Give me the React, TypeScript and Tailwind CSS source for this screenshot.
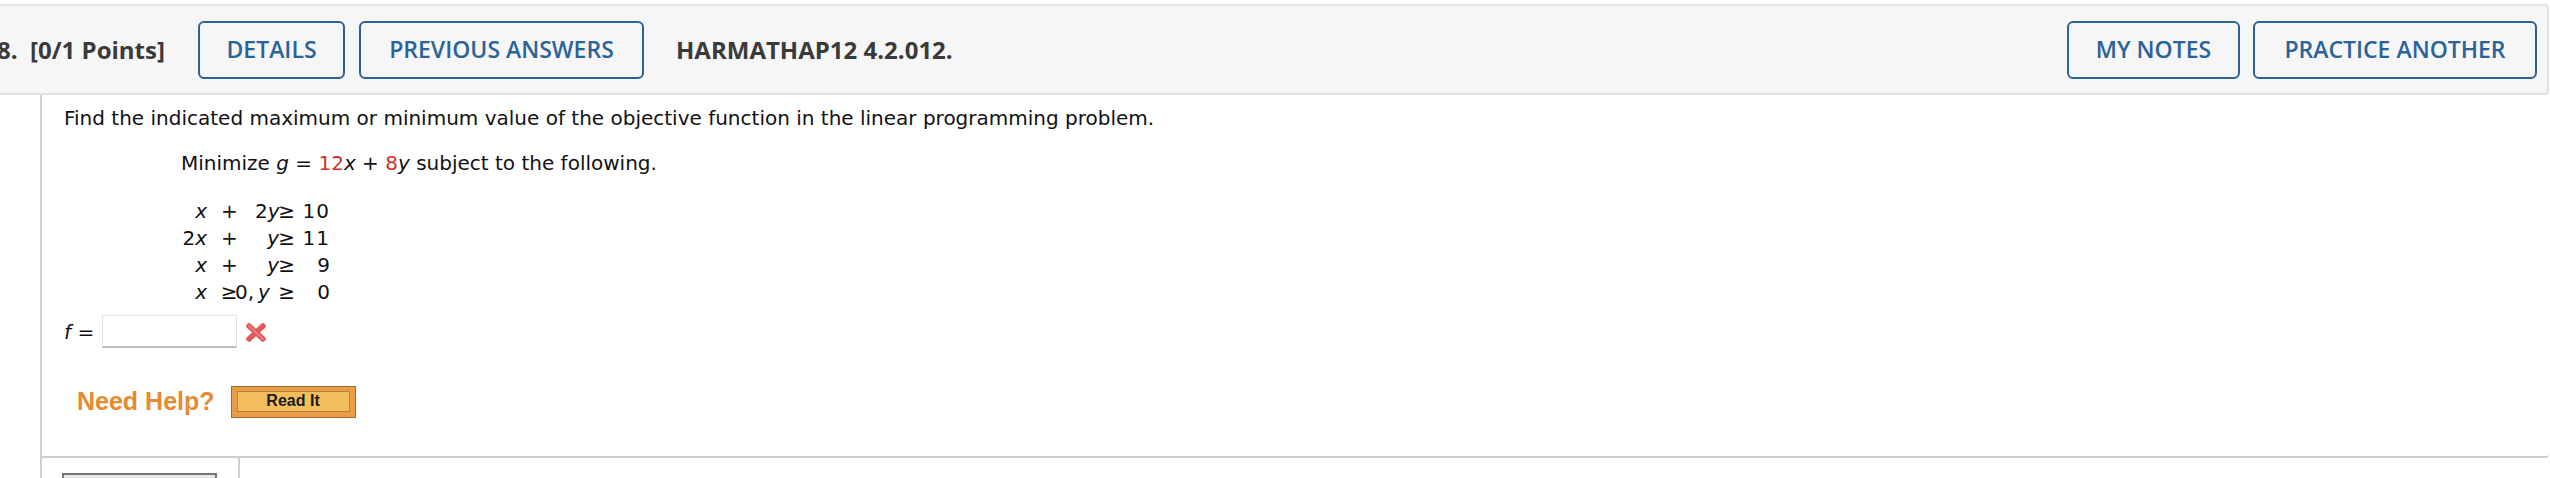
export default function App() {
  const blueBtn =
    "h-[58px] flex items-center justify-center border-2 border-[#2c6394] rounded-[6px] text-[#2b6398] text-[23px] font-semibold uppercase"

  return (
    <div className="w-[2550px] h-[478px] bg-white overflow-hidden" style={{ fontFamily: '"DejaVu Sans", Verdana, sans-serif' }}>
      {/* Question header */}
      <div
        className="mt-[4px] -ml-[8px] mr-[1px] h-[91px] flex items-center border-2 border-l-0 border-[#e2e2e2] rounded-r-[4px] bg-[#f6f6f6] pl-[5px] pr-[10px]"
        style={{ fontFamily: '"Open Sans", sans-serif' }}
      >
        <span className="w-[201px] text-[24px] font-bold text-[#3a3a3a] whitespace-pre">8.  [0/1 Points]</span>
        <div className="flex gap-[14px]">
          <button className={`${blueBtn} w-[147px]`}>Details</button>
          <button className={`${blueBtn} w-[285px]`}>Previous Answers</button>
        </div>
        <span className="ml-[32px] text-[24px] font-bold text-[#3a3a3a]">HARMATHAP12 4.2.012.</span>
        <div className="ml-auto flex gap-[13px]">
          <button className={`${blueBtn} w-[173px]`}>My Notes</button>
          <button className={`${blueBtn} w-[284px]`}>Practice Another</button>
        </div>
      </div>

      {/* Question body */}
      <div className="ml-[40px] mr-[1px] border-l-2 border-[#cfcfcf]">
        <div className="h-[363px] border-b-2 border-[#cfcfcf] rounded-br-[4px] pl-[22px] pt-[10px] text-[20px] text-[#111]">
          <p className="leading-[27px]">
            Find the indicated maximum or minimum value of the objective function in the linear programming problem.
          </p>

          <p className="leading-[27px] mt-[18px] ml-[117px]">
            Minimize <i>g</i> = <span className="text-[#d4312b]">12</span><i>x</i> + <span className="text-[#d4312b]">8</span><i>y</i> subject to the following.
          </p>

          <div className="mt-[21px] ml-[116px] grid grid-cols-[27px_48px_24px_15px_36px] leading-[27px]">
            <span className="text-right"><i>x</i></span>
            <span className="pl-[14px]">+</span>
            <span className="text-right">2<i>y</i></span>
            <span className="flex justify-center">≥</span>
            <span className="text-right tracking-[1px]">10</span>

            <span className="text-right">2<i>x</i></span>
            <span className="pl-[14px]">+</span>
            <span className="text-right"><i>y</i></span>
            <span className="flex justify-center">≥</span>
            <span className="text-right tracking-[1px]">11</span>

            <span className="text-right"><i>x</i></span>
            <span className="pl-[14px]">+</span>
            <span className="text-right"><i>y</i></span>
            <span className="flex justify-center">≥</span>
            <span className="text-right">9</span>

            <span className="text-right"><i>x</i></span>
            <span className="col-span-2 flex">
              <span className="w-[12px] ml-[16px] flex justify-center">≥</span>
              <span>0,</span>
              <span className="ml-[4px]"><i>y</i></span>
            </span>
            <span className="flex justify-center">≥</span>
            <span className="text-right">0</span>
          </div>

          <div className="mt-[9px] flex items-center h-[33px]">
            <span className="w-[38px] whitespace-pre"><i>f</i> =</span>
            <div className="w-[135px] h-[33px] bg-white border border-[#e2e2e2] border-b-[#bdbdbd] border-b-2" />
            <svg className="ml-[8px] mt-[1px]" width="22" height="21" viewBox="0 0 22 21">
              <path d="M4 4 L18 17 M18 4 L4 17" stroke="#e05c5c" strokeWidth="5.5" strokeLinecap="round" />
              <path d="M4 4 L18 17" stroke="#ec8585" strokeWidth="1.5" strokeLinecap="round" />
            </svg>
          </div>

          <div className="mt-[35px] ml-[13px] flex items-center">
            <span
              className="text-[25px] font-bold text-[#e68a34]"
              style={{ fontFamily: '"Liberation Sans", Arial, sans-serif' }}
            >
              Need Help?
            </span>
            <div className="ml-[16px] w-[125px] h-[32px] border border-[#9c6a32] bg-[#eb9d45] px-[5px] pt-[4px] pb-[5px]">
              <div
                className="h-full border border-[#b5843f] bg-[#f3be5c] flex items-center justify-center text-[16px] font-bold text-[#1a1a1a]"
                style={{ fontFamily: '"Liberation Sans", Arial, sans-serif' }}
              >
                Read It
              </div>
            </div>
          </div>
        </div>

        {/* Next part (cut off) */}
        <div className="flex h-[40px]">
          <div className="w-[196px] pl-[20px] pt-[15px]">
            <div className="w-[155px] h-[30px] border-2 border-[#777] bg-[#e8e8e8]" />
          </div>
          <div className="flex-1 border-l-2 border-[#cfcfcf]" />
        </div>
      </div>
    </div>
  )
}
